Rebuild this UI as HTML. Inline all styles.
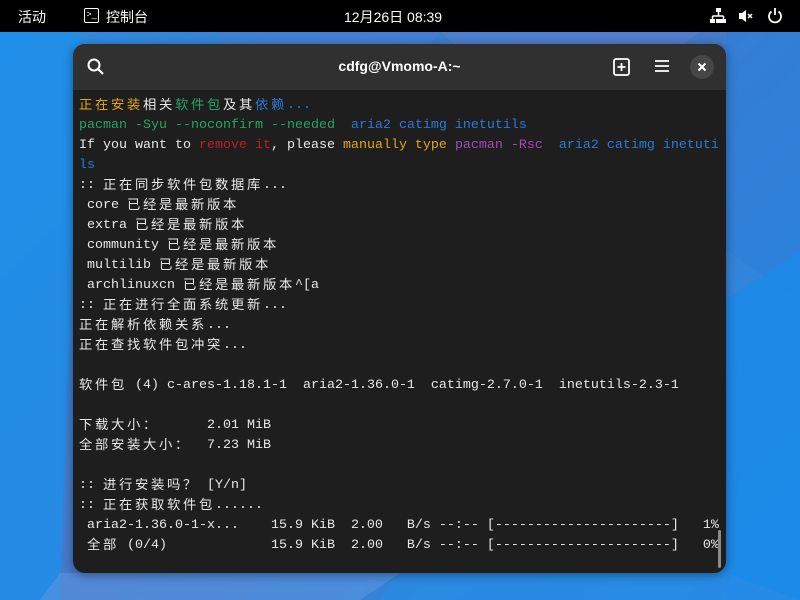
<!DOCTYPE html>
<html><head><meta charset="utf-8"><style>
*{margin:0;padding:0;box-sizing:border-box}
body{width:800px;height:600px;overflow:hidden;position:relative;font-family:"Liberation Sans","Noto Sans CJK SC",sans-serif;
background:linear-gradient(135deg,#2a8fe6 0%,#3a7fd0 30%,#4a78c8 50%,#2f86dc 75%,#1f8de6 100%)}
.facet{position:absolute}
#top{position:absolute;left:0;top:0;width:800px;height:32px;background:#000;color:#fff;font-size:14px}
#top span{position:absolute;top:7px}
#win{position:absolute;left:73px;top:44px;width:653px;height:529px;background:#1e1e1e;border-radius:12px;overflow:hidden;box-shadow:0 2px 10px rgba(0,0,0,.4)}
#hd{height:46px;background:#303030;position:relative;color:#fff}
#hd .t{position:absolute;left:0;right:0;top:14px;text-align:center;font-size:14px;font-weight:bold}
#term{position:absolute;left:6px;top:52px;width:660px;font-family:"Liberation Mono","Noto Sans CJK SC",monospace;font-size:13.33px;color:#e8e8e8}
#term div{height:20px;line-height:20px;overflow:visible;white-space:pre}
.c{letter-spacing:2.67px;font-family:"Noto Sans CJK SC",sans-serif;line-height:14px;display:inline-block;vertical-align:-1px}
.y{color:#e5a50a}.g{color:#26a269}.b{color:#2a7ad8}.r{color:#c01c28}.p{color:#a347ba}
</style></head><body>
<svg class="facet" style="left:0;top:0" width="800" height="600">
<polygon points="0,32 80,32 60,600 0,600" fill="#1e90ea" opacity=".8"/>
<polygon points="220,32 440,32 300,200" fill="#4a7fd6" opacity=".6"/>
<polygon points="440,32 700,32 560,130" fill="#5a82d0" opacity=".5"/>
<polygon points="726,32 800,32 800,300 726,250" fill="#2d7fd8" opacity=".7"/>
<polygon points="726,300 800,250 800,600 726,600" fill="#1a8ae8" opacity=".8"/>
<polygon points="60,573 400,573 360,600 40,600" fill="#5a95e0" opacity=".6"/>
<polygon points="400,573 726,573 800,600 380,600" fill="#2a8be6" opacity=".7"/>
</svg>
<div id="top"><span style="left:18px">活动</span>
<span style="left:84px;top:8px;width:15px;height:15px;border:1.5px solid #fff;border-radius:2px;font-size:9px;line-height:11px;text-align:center">&gt;_</span>
<span style="left:106px">控制台</span>
<span style="left:344px">12月26日 08:39</span>
<svg style="position:absolute;left:710px;top:8px" width="16" height="16"><rect x="6" y="0" width="5" height="4" fill="#fff"/><rect x="0" y="11" width="5" height="4" fill="#fff"/><rect x="11" y="11" width="5" height="4" fill="#fff"/><rect x="6" y="11" width="5" height="4" fill="#fff"/><path d="M8.5 4v4M2.5 8h11M2.5 8v3M13.5 8v3" stroke="#fff" stroke-width="1.5" fill="none"/></svg>
<svg style="position:absolute;left:738px;top:9px" width="16" height="14"><path d="M1 4h3l4-3v12l-4-3H1z" fill="#fff"/><path d="M10 5l4 4M14 5l-4 4" stroke="#fff" stroke-width="1.5"/></svg>
<svg style="position:absolute;left:767px;top:7px" width="16" height="17"><path d="M4.5 4.5a6 6 0 1 0 7 0" stroke="#fff" stroke-width="1.8" fill="none"/><path d="M8 1v7" stroke="#fff" stroke-width="1.8"/></svg>
</div>
<div id="win">
<div id="hd">
<svg style="position:absolute;left:14px;top:14px" width="18" height="18"><circle cx="7" cy="7" r="5.5" stroke="#fff" stroke-width="2" fill="none"/><path d="M11 11l5 5" stroke="#fff" stroke-width="2.2"/></svg>
<div class="t">cdfg@Vmomo-A:~</div>
<svg style="position:absolute;left:540px;top:14px" width="18" height="18"><rect x="1" y="1" width="15" height="16" rx="2" stroke="#fff" stroke-width="1.8" fill="none"/><path d="M8.5 5v8M4.5 9h8" stroke="#fff" stroke-width="1.8"/></svg>
<svg style="position:absolute;left:581px;top:15px" width="16" height="14"><path d="M1 2h14M1 7h14M1 12h14" stroke="#fff" stroke-width="1.8"/></svg>
<div style="position:absolute;left:617px;top:11px;width:24px;height:24px;border-radius:12px;background:#464646"></div>
<svg style="position:absolute;left:624px;top:18px" width="10" height="10"><path d="M1.5 1.5l7 7M8.5 1.5l-7 7" stroke="#fff" stroke-width="2"/></svg>
</div>
<div id="term"><div><span class="c y">正在安装</span><span class="c">相关</span><span class="c g">软件包</span><span class="c">及其</span><span class="c b">依赖</span><span class="b">...</span></div><div><span class="g">pacman -Syu --noconfirm --needed</span>  <span class="b">aria2 catimg inetutils</span></div><div>If you want to <span class="r">remove it</span>, please <span class="y">manually type</span> <span class="p">pacman -Rsc</span>  <span class="b">aria2 catimg inetuti</span></div><div><span class="b">ls</span></div><div>:: <span class="c">正在同步软件包数据库</span>...</div><div> core <span class="c">已经是最新版本</span></div><div> extra <span class="c">已经是最新版本</span></div><div> community <span class="c">已经是最新版本</span></div><div> multilib <span class="c">已经是最新版本</span></div><div> archlinuxcn <span class="c">已经是最新版本</span>^[a</div><div>:: <span class="c">正在进行全面系统更新</span>...</div><div><span class="c">正在解析依赖关系</span>...</div><div><span class="c">正在查找软件包冲突</span>...</div><div> </div><div><span class="c">软件包</span> (4) c-ares-1.18.1-1  aria2-1.36.0-1  catimg-2.7.0-1  inetutils-2.3-1</div><div> </div><div><span class="c">下载大小：</span>      2.01 MiB</div><div><span class="c">全部安装大小：</span>  7.23 MiB</div><div> </div><div>:: <span class="c">进行安装吗？</span> [Y/n]</div><div>:: <span class="c">正在获取软件包</span>......</div><div> aria2-1.36.0-1-x...    15.9 KiB  2.00   B/s --:-- [----------------------]   1%</div><div> <span class="c">全部</span> (0/4)             15.9 KiB  2.00   B/s --:-- [----------------------]   0%</div></div>
<div style="position:absolute;left:645px;top:486px;width:3px;height:38px;background:#8a8a8a;border-radius:2px"></div>
</div>
</body></html>
